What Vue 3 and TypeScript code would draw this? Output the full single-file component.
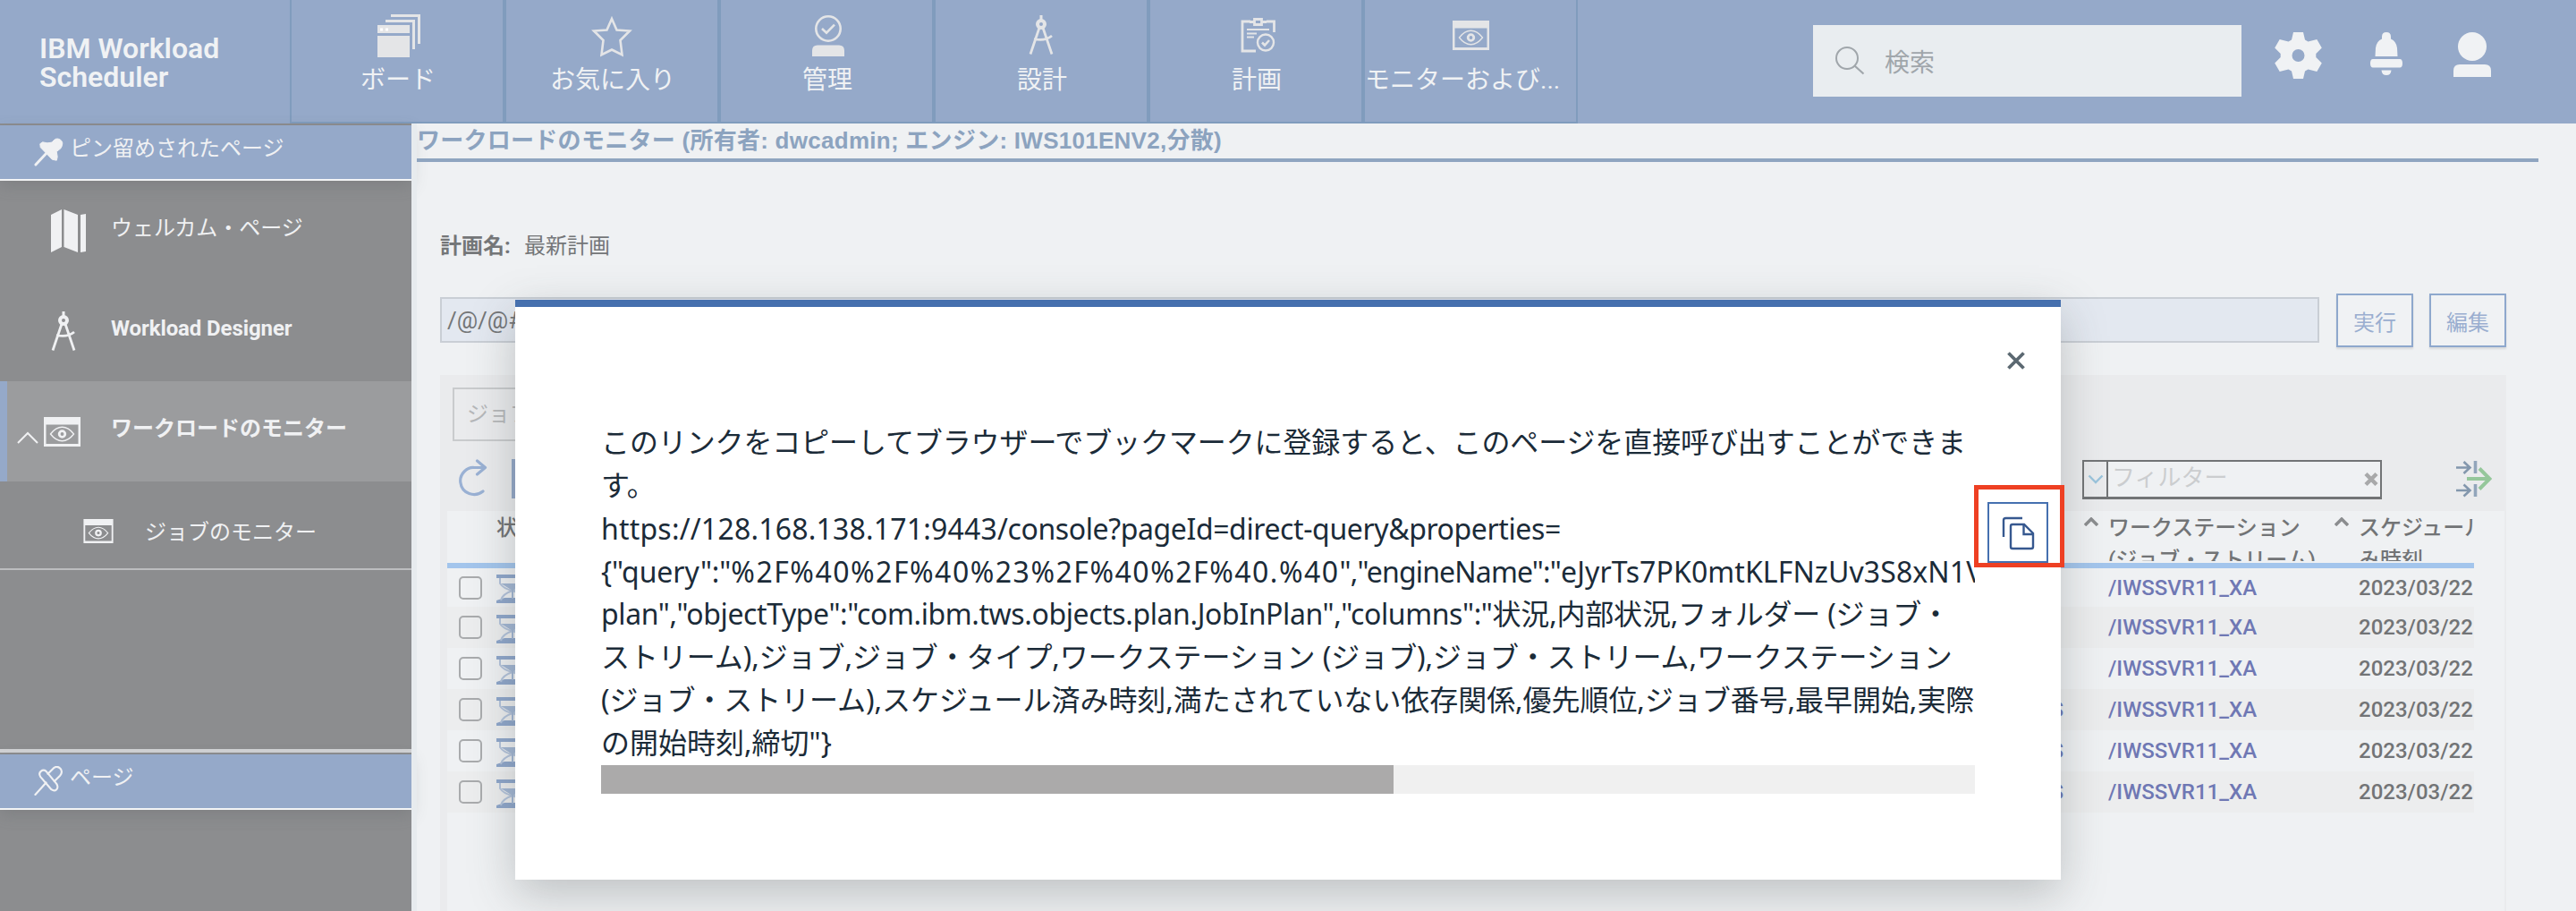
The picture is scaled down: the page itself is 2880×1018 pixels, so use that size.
<script setup lang="ts">
interface MenuItem {
  id: string
  label: string
}
interface Segment {
  text: string
  spacing: number
}

const menu: MenuItem[] = [
  { id: 'boards', label: 'ボード' },
  { id: 'star', label: 'お気に入り' },
  { id: 'admin', label: '管理' },
  { id: 'compass', label: '設計' },
  { id: 'clipboard', label: '計画' },
  { id: 'monitor', label: 'モニターおよび...' },
]

const lines: { latin?: boolean; parts: Segment[] }[] = [
  { parts: [{ text: 'このリンクをコピーしてブラウザーでブックマークに登録すると、このページを直接呼び出すことができま', spacing: -0.11 }] },
  { parts: [{ text: 'す。', spacing: 0 }] },
  {
    latin: true,
    parts: [
      { text: 'https://128.168.138.171:9443', spacing: 0.2 },
      { text: '/console?pageId=direct-query&properties=', spacing: -0.4 },
    ],
  },
  {
    latin: true,
    parts: [
      { text: '{"query":"', spacing: -0.1 },
      { text: '%2F%40%2F%40%23%2F%40%2F%40.%40', spacing: 1.5 },
      { text: '","engineName":"', spacing: -0.85 },
      { text: 'eJyrTs7PK0mtKLFNzUv3S8xN1V', spacing: 0.1 },
    ],
  },
  {
    parts: [
      { text: 'plan","objectType":"com.ibm.tws.objects.plan.JobInPlan","columns":"', spacing: -0.4 },
      { text: '状況,内部状況,フォルダー (ジョブ・', spacing: -0.2 },
    ],
  },
  { parts: [{ text: 'ストリーム),ジョブ,ジョブ・タイプ,ワークステーション (ジョブ),ジョブ・ストリーム,ワークステーション', spacing: -0.08 }] },
  { parts: [{ text: '(ジョブ・ストリーム),スケジュール済み時刻,満たされていない依存関係,優先順位,ジョブ番号,最早開始,実際', spacing: -0.06 }] },
  { parts: [{ text: 'の開始時刻,締切"}', spacing: 0 }] },
]

const rows: { job: string }[] = [{ job: '' }, { job: '' }, { job: '' }, { job: 'S' }, { job: 'S' }, { job: 'S' }]
</script>

<template>
  <div class="page">
    <svg class="defs" width="0" height="0">
      <symbol id="i-boards" viewBox="0 0 48 48">
        <path d="M15 0h33v33h-3V3H15zM9 6h33v33h-3V9H9z" />
        <path d="M0 12h36v9H0zM0 24h36v24H0z" />
        <path class="cut" d="M3 15.500h3v3H3zM9 15.500h3v3H9z" />
      </symbol>
      <symbol id="i-star" viewBox="0 0 48 48">
        <path d="M24 5l5.500 12.500 14.500 1L33.500 29l2 16.200L24 39.500 12.500 45.200l2-16.200L4 18.500l14.500-1z" fill="none" stroke="currentColor" stroke-width="2.600" />
      </symbol>
      <symbol id="i-admin" viewBox="0 0 48 48">
        <circle cx="26" cy="16" r="13.700" fill="none" stroke="currentColor" stroke-width="2.600" />
        <path d="M19 16l5 4.700 9-9" fill="none" stroke="currentColor" stroke-width="2.600" />
        <path d="M8 47v-6.500q0-6 6-6h24q6 0 6 6V47z" />
      </symbol>
      <symbol id="i-compass" viewBox="0 0 28 46">
        <path d="M12.500 1h3v7h-3z" />
        <circle cx="14" cy="11" r="4" fill="none" stroke="currentColor" stroke-width="4" />
        <path d="M12 15L2 44.500M16 15l10 29.500M6 27.500q12 3 20-3.500" fill="none" stroke="currentColor" stroke-width="2.800" />
      </symbol>
      <symbol id="i-clipboard" viewBox="0 0 48 48">
        <path d="M16 8H7v33h15M34 8h8.500v12" fill="none" stroke="currentColor" stroke-width="2.800" />
        <path d="M20.500 5.500h8v6h-8zM20 8.500h-5M29 8.500h5" fill="none" stroke="currentColor" stroke-width="2.800" />
        <path d="M12 17h25M12 21.500h11M12 25.500h8" fill="none" stroke="currentColor" stroke-width="2.200" />
        <circle cx="33" cy="31.500" r="9" fill="none" stroke="currentColor" stroke-width="2.400" />
        <path d="M29 31.500l3 3 5-5.500" fill="none" stroke="currentColor" stroke-width="2.600" />
      </symbol>
      <symbol id="i-monitor" viewBox="0 0 41 33">
        <path fill-rule="evenodd" d="M0 0h41v33H0zM2.500 8.500v21.500h36V8.500z" />
        <path d="M7.500 19q6-7.700 13-7.700T33.500 19q-6 7.700-13 7.700T7.500 19z" fill="none" stroke="currentColor" stroke-width="1.400" />
        <circle cx="20.500" cy="19" r="3.300" fill="none" stroke="currentColor" stroke-width="2.800" />
      </symbol>
      <symbol id="i-hourglass" viewBox="0 0 36 32">
        <path d="M0 0h36v4H0zM0 32h36v-3l-9-3H9l-9 3z" fill="#8fa7cb" />
        <path d="M4 4v6q4 6 14 8 10-2 14-8V4M18 18q-12 4-13 11M18 18q12 4 13 11" fill="none" stroke="#b3c3db" stroke-width="2" />
        <path d="M5 10h26l-13 8z" fill="#a3b7d4" />
        <path d="M17 17h2v10h-2z" fill="#a3b7d4" />
      </symbol>
    </svg>

    <header class="top">
      <div class="brand">IBM Workload<br />Scheduler</div>
      <nav class="menu">
        <div v-for="m in menu" :key="m.id" class="tile" :class="'tile-' + m.id">
          <svg class="tile-icon" :class="'ic-' + m.id"><use :href="'#i-' + m.id" /></svg>
          <span class="tile-label">{{ m.label }}</span>
        </div>
      </nav>
      <div class="search">
        <svg width="34" height="34" viewBox="0 0 34 34"><circle cx="14" cy="14" r="12" fill="none" stroke="#a0a6ab" stroke-width="2" /><path d="M22.500 22.500L32.500 31.500" stroke="#a0a6ab" stroke-width="2.200" /></svg>
        <span>検索</span>
      </div>
      <div class="tools">
        <svg class="gear" viewBox="-26.500 -26 53 52">
          <path fill-rule="evenodd" d="M-5.500-26h11l2 8.500 3.500 2 9.800-2.500 5.500 9.500-6.500 6.500v4l6.500 6.500-5.500 9.500-9.800-2.500-3.500 2L5.500 26h-11l-2-8.500-3.500-2-9.800 2.500-5.500-9.500 6.500-6.500v-4l-6.500-6.500 5.500-9.500 9.800 2.500 3.500-2zM0-7a7 7 0 1 0 0 14 7 7 0 1 0 0-14z" />
        </svg>
        <svg class="bell" viewBox="0 0 36 48">
          <path d="M13 5q0-5 5-5t5 5v2.500q6 2.500 7 10L30.500 27h-25L6 17.500q1-7.500 7-10zM3 30h30q3 0 3 4.700T33 39.500H3q-3 0-3-4.800T3 30zM12.500 42.500h11q-.5 5.500-5.500 5.500t-5.500-5.500z" />
        </svg>
        <svg class="user" viewBox="0 0 42 50"><circle cx="21" cy="16" r="16" /><path d="M0 50V43q0-7 7-7h28q7 0 7 7v7z" /></svg>
      </div>
    </header>

    <div class="body">
      <aside class="side">
        <div class="side-head">
          <svg class="pin solid" viewBox="0 0 34 34"><path d="M2 32l12-13" /><path d="M21 6q4-6 9-3t1 10l-5 4 1 6-1 4-5-1L7.500 12l-.5-4 3-2 5 1z" stroke-width="1" /></svg>
          <span>ピン留めされたページ</span>
        </div>
        <div class="item">
          <svg class="map" viewBox="0 0 39 48"><path d="M0 6l12-6v42L0 48zM14.500 0L30 6v42l-15.500-6zM33 6l6-1v42l-6 1z" /></svg>
          <span>ウェルカム・ページ</span>
        </div>
        <div class="item">
          <svg class="comp"><use href="#i-compass" /></svg>
          <span class="designer">Workload Designer</span>
        </div>
        <div class="item active">
          <svg class="chev" viewBox="0 0 24 14"><path d="M1 13L12 2l11 11" fill="none" stroke="currentColor" stroke-width="2" /></svg>
          <svg class="mon"><use href="#i-monitor" /></svg>
          <span>ワークロードのモニター</span>
        </div>
        <div class="item sub">
          <svg class="mon small" viewBox="0 0 41 33"><use href="#i-monitor" /></svg>
          <span>ジョブのモニター</span>
        </div>
        <div class="gap"></div>
        <div class="side-head">
          <svg class="pin" viewBox="0 0 34 34"><path d="M1.500 33L14 19" /><path d="M7.500 12.500q-2.500-4 .5-6.500t6 0L26 20.500q2.500 4 0 6.500t-6 0z" /><path d="M16 9l6.500-6.500q4-3.500 8 .5 3 4-.5 8L23.500 17.500" /></svg>
          <span>ページ</span>
        </div>
      </aside>

      <main class="main">
        <h1 class="title">ワークロードのモニター (所有者: dwcadmin; エンジン: IWS101ENV2,分散)</h1>
        <div class="plan"><b>計画名:</b><span>最新計画</span></div>
        <div class="query">
          <div class="query-input">/@/@#@/@.@</div>
          <button class="btn">実行</button>
          <button class="btn">編集</button>
        </div>
        <section class="panel">
          <div class="jobs">ジョブ</div>
          <div class="bar">
            <svg class="refresh" viewBox="0 0 32 42"><path d="M27 36q-7 5.500-15.500 2.500T1.800 26Q1 19 6 14t11-4.500H29M20.500 2l9 7.500-9 7.500" fill="none" stroke="#9ab1d4" stroke-width="3.200" stroke-linecap="round" stroke-linejoin="round" /></svg>
            <div class="next"></div>
            <div class="filter">
              <div class="drop"><svg width="18" height="11" viewBox="0 0 18 11"><path d="M1.500 1.500L9 9l7.500-7.500" fill="none" stroke="#9bc4dc" stroke-width="2.400" /></svg></div>
              <span>フィルター</span>
              <svg class="clear" viewBox="0 0 18 17"><path d="M3 2.500l12 12M15 2.500l-12 12" stroke="#a8a9aa" stroke-width="4.500" /></svg>
            </div>
            <svg class="cols" viewBox="0 0 40 42"><g fill="none" stroke="#8397ad" stroke-width="2.600"><path d="M0 8.500h14M8.500 2l7 6.500-7 6.500M0 34h14M8.500 27.500l7 6.500-7 6.500" /><path d="M21.500 1v14M21.500 27v14" stroke-width="3.600" stroke="#92a5bb" /></g><path d="M12 21h25M26 9.500L37.500 21 26 32.500" fill="none" stroke="#95c79b" stroke-width="4" /></svg>
          </div>
          <div class="table">
            <div class="thead">
              <span></span><span class="th">状況</span><span></span>
              <span class="caret"><svg viewBox="0 0 16 10"><path d="M1 9l7-7 7 7" /></svg></span>
              <span class="th">ワークステーション<br />(ジョブ・ストリーム)</span>
              <span class="th last"><svg class="lead" viewBox="0 0 16 10"><path d="M1 9l7-7 7 7" /></svg>スケジュール済<br />み時刻</span>
            </div>
            <div v-for="(r, i) in rows" :key="i" class="row">
              <span class="check"></span>
              <svg class="hour"><use href="#i-hourglass" /></svg>
              <span class="link job">{{ r.job }}</span>
              <span></span>
              <span class="link">/IWSSVR11_XA</span>
              <span class="date">2023/03/22</span>
            </div>
          </div>
        </section>
      </main>
    </div>

    <div class="dialog">
      <svg class="close" viewBox="0 0 20 20"><path d="M1.500 1.500l17 17M18.500 1.500l-17 17" stroke="#5b6871" stroke-width="3.800" /></svg>
      <div class="content">
        <div v-for="(l, i) in lines" :key="i" class="line" :class="{ latin: l.latin }"><span v-for="(p, j) in l.parts" :key="j" :style="{ letterSpacing: p.spacing + 'px' }">{{ p.text }}</span></div>
        <div class="scroll"><div class="thumb"></div></div>
      </div>
      <div class="callout">
        <div class="copy">
          <svg viewBox="0 0 38 38"><path d="M2 23V4.500Q2 2 4.500 2H23" /><path d="M12 9h13l10 10v15q0 2-2 2H12q-2 0-2-2V11q0-2 2-2z" /><path d="M24.500 9v11H35" /></svg>
        </div>
      </div>
    </div>
  </div>
</template>

<style>
body {
  background: #eff1f3;
  overflow: hidden;
}
</style>

<style scoped>
* {
  box-sizing: border-box;
}
.page {
  position: relative;
  width: 2880px;
  height: 1018px;
  overflow: hidden;
  display: flex;
  flex-direction: column;
  font-family: Roboto, "Noto Sans CJK JP", sans-serif;
  font-size: 24px;
  color: #747678;
  background: #eff1f3;
}
.defs {
  position: absolute;
}
svg {
  display: block;
  fill: currentColor;
  flex: none;
}
.cut {
  fill: #fff;
}
.top {
  height: 138px;
  flex: none;
  display: flex;
  background: #95a9c9;
  color: #f0f2f4;
}
.brand {
  width: 324px;
  flex: none;
  padding: 38px 0 0 44px;
  font-size: 32px;
  line-height: 32px;
  font-weight: 600;
}
.menu {
  display: flex;
  flex: none;
}
.tile {
  width: 240px;
  border: 2px solid #809cbd;
  border-top: 0;
  display: flex;
  flex-direction: column;
  align-items: center;
  font-size: 28px;
}
.tile-icon {
  width: 48px;
  height: 48px;
  margin-top: 16px;
  color: #e4e5e7;
}
.ic-compass {
  width: 28px;
  height: 46px;
  margin-bottom: 2px;
}
.ic-boards,
.ic-clipboard {
  margin-left: 4px;
}
.ic-monitor {
  width: 41px;
  height: 33px;
  margin: 23px 0 8px;
}
.tile-label {
  line-height: 40px;
  margin: 6px 0 0 2px;
  white-space: nowrap;
}
.tile-monitor .tile-label {
  align-self: flex-start;
  margin-left: 0;
}
.search {
  width: 479px;
  height: 80px;
  margin: 28px 0 0 263px;
  padding-left: 24px;
  background: #e9edf0;
  display: flex;
  align-items: center;
  font-size: 28px;
  color: #a0a6ab;
}
.search span {
  margin-left: 22px;
}
.tools {
  display: flex;
  align-items: flex-start;
  padding: 36px 0 0 37px;
}
.gear {
  width: 53px;
  height: 52px;
}
.bell {
  width: 36px;
  height: 48px;
  margin-left: 54px;
}
.user {
  width: 42px;
  height: 50px;
  margin-left: 57px;
}
.body {
  flex: 1;
  display: flex;
  min-height: 0;
}
.side {
  width: 460px;
  flex: none;
  padding-top: 2px;
  background: #8c8d8f;
  color: #f0f1f3;
  display: flex;
  flex-direction: column;
}
.side-head {
  height: 62px;
  flex: none;
  display: flex;
  background: #95a9c9;
  border-bottom: 2px solid #f3f4f5;
  padding: 13px 0 0 38px;
  box-shadow: 0 6px 16px rgba(90, 94, 98, 0.25);
}
.side-head span {
  line-height: 30px;
  margin: -2px 0 0 7px;
}
.pin {
  width: 33px;
  height: 33px;
  fill: none;
  stroke: currentColor;
  stroke-width: 2.200;
  stroke-linecap: round;
  stroke-linejoin: round;
}
.solid {
  fill: currentColor;
  stroke-width: 3;
}
.item {
  height: 112px;
  flex: none;
  display: flex;
  align-items: center;
}
.item span {
  margin-top: -12px;
}
.map {
  width: 39px;
  height: 48px;
  margin: 0 28px 0 57px;
}
.comp {
  width: 28px;
  height: 46px;
  margin: 0 39px 0 57px;
}
.item .designer {
  margin-top: -7px;
  font-weight: 700;
  letter-spacing: -0.1px;
}
.active {
  background: #9b9c9e;
  border-left: 8px solid #95a9c9;
  padding-left: 11px;
  font-weight: 700;
}
.chev {
  width: 24px;
  height: 14px;
  margin-top: 14px;
}
.mon {
  width: 41px;
  height: 33px;
  margin: 0 34px 0 6px;
}
.sub {
  height: 99px;
  align-items: flex-start;
  border-bottom: 2px solid #bcbdbf;
}
.small {
  width: 34px;
  height: 27px;
  margin: 42px 35px 0 93px;
}
.item.sub span {
  margin-top: 37px;
}
.gap {
  height: 206px;
  flex: none;
  border-bottom: 2px solid #8c8d8f;
  background: linear-gradient(#8c8d8f, #8c8d8f) top / 100% 200px no-repeat, #d2d3d5;
}
.main {
  flex: 1;
  border-left: 6px solid #e7ebee;
  display: flex;
  flex-direction: column;
}
.title {
  margin: 0 42px 0 0;
  height: 43px;
  border-bottom: 4px solid #8fa5c0;
  font-family: "Liberation Sans", "Noto Sans CJK JP", sans-serif;
  font-size: 26px;
  line-height: 39px;
  letter-spacing: 0.27px;
  font-weight: 700;
  color: #8ca3bf;
  white-space: nowrap;
}
.plan {
  display: flex;
  margin: 76px 0 0 26px;
  line-height: 36px;
  height: 36px;
}
.plan b {
  width: 94px;
}
.query {
  display: flex;
  align-items: flex-start;
  margin: 35px 78px 0 26px;
}
.query-input {
  flex: 1;
  height: 51px;
  margin: 4px 19px 0 0;
  border: 2px solid #c9ced5;
  background: #e3e8f0;
  padding-left: 6px;
  font-size: 26px;
  line-height: 48px;
}
.btn {
  width: 86px;
  height: 60px;
  border: 2px solid #8ea8cd;
  background: #f0f2f4;
  color: #9aaed0;
  font: inherit;
  padding: 0;
  box-shadow: 0 2px 2px rgba(0, 0, 0, 0.1);
}
.btn + .btn {
  margin-left: 18px;
}
.panel {
  flex: 1;
  margin: 27px 78px 0 26px;
  background: #eaebed;
  display: flex;
  flex-direction: column;
}
.query + .panel {
  margin-top: 31px;
}
.jobs {
  width: 400px;
  height: 60px;
  margin: 14px 0 0 14px;
  border: 2px solid #c9cbcd;
  padding-left: 14px;
  line-height: 56px;
  color: #b6b8ba;
}
.bar {
  display: flex;
  height: 78px;
  align-items: flex-start;
}
.refresh {
  width: 32px;
  height: 42px;
  margin: 20px 0 0 21px;
}
.next {
  width: 40px;
  height: 44px;
  margin: 20px auto 0 27px;
  background: #95a9c9;
}
.filter {
  width: 335px;
  height: 44px;
  margin-top: 21px;
  border: 2px solid #727476;
  border-bottom-width: 3px;
  background: #eff1f3;
  display: flex;
  align-items: center;
  font-size: 26px;
  color: #cbcdcf;
}
.drop {
  width: 27px;
  height: 100%;
  border-right: 2px solid #727476;
  background: #eaebed;
  display: flex;
  align-items: center;
  justify-content: center;
}
.filter span {
  margin: -2px 0 0 4px;
  line-height: 39px;
}
.clear {
  width: 18px;
  height: 17px;
  margin: 0 1px 0 auto;
}
.cols {
  width: 40px;
  height: 42px;
  margin: 21px 16px 0 83px;
}
.table {
  flex: 1;
  margin: 0 2px 0 8px;
  padding-right: 34px;
  background: #eff1f3;
}
.thead,
.row {
  display: grid;
  grid-template-columns: 55px 40px 1fr 50px 281px 128px;
}
.thead {
  height: 64px;
  border-bottom: 6px solid #a3c5ec;
  line-height: 36px;
  font-weight: 500;
  color: #727476;
}
.th {
  height: 56px;
  overflow: hidden;
  white-space: nowrap;
  padding-top: 1px;
}
.caret svg,
.lead {
  width: 16px;
  height: 10px;
  fill: none;
  stroke: #8b8d8f;
  stroke-width: 3.500;
}
.caret svg {
  margin: 7px 0 0 23px;
}
.last {
  position: relative;
  margin-left: -30px;
  padding-left: 29px;
}
.lead {
  position: absolute;
  left: 2px;
  top: 7px;
}
.row {
  height: 46px;
  align-items: center;
  font-weight: 500;
}
.row:nth-child(2) {
  height: 43px;
}
.row:nth-child(odd) {
  background: #ecedee;
}
.check {
  width: 26px;
  height: 26px;
  margin-left: 13px;
  border: 2px solid #a9abad;
  border-radius: 5px;
}
.hour {
  width: 36px;
  height: 32px;
  margin-top: 3px;
}
.link {
  color: #6f78b4;
}
.job {
  text-align: right;
}
.date {
  margin-left: -1px;
  color: #727476;
}
.dialog {
  position: absolute;
  left: 576px;
  top: 335px;
  width: 1728px;
  height: 648px;
  background: #fff;
  border-top: 8px solid #4670ae;
  box-shadow: 0 16px 48px rgba(60, 70, 70, 0.28);
  color: #1b2b38;
}
.close {
  width: 20px;
  height: 20px;
  margin: 50px 0 0 1668px;
}
.content {
  width: 1536px;
  margin: 59px 0 0 96px;
}
.line {
  height: 48px;
  line-height: 44px;
  font-family: "Noto Sans", "Noto Sans CJK JP", sans-serif;
  font-size: 32px;
  white-space: nowrap;
  overflow: hidden;
}
.latin {
  line-height: 46px;
}
.scroll {
  height: 32px;
  margin-top: -1px;
  background: #f0f0f0;
}
.thumb {
  width: 886px;
  height: 32px;
  background: #abaaaa;
}
.callout {
  position: absolute;
  left: 1631px;
  top: 199px;
  width: 101px;
  height: 92px;
  border: 5px solid #ee4023;
}
.copy {
  width: 68px;
  height: 68px;
  margin: 14px 0 0 10px;
  border: 2px solid #4570b0;
  padding: 14px 0 0 14px;
}
.copy svg {
  width: 38px;
  height: 38px;
  fill: none;
  stroke: #36588f;
  stroke-width: 2.400;
}
</style>
